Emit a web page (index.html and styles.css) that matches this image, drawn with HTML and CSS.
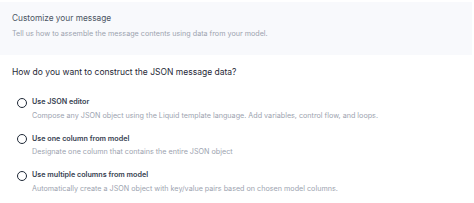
FILE: index.html
```html
<!DOCTYPE html>
<html lang="en">
<head>
    <meta charset="UTF-8">
    <title>Customize your message</title>
    <link rel="stylesheet" href="styles.css">
</head>
<body>
    <div class="panel-header">
        <h2>Customize your message</h2>
        <p>Tell us how to assemble the message contents using data from your model.</p>
    </div>

    <div class="panel-body">
        <h3>How do you want to construct the JSON message data?</h3>

        <div class="options">
            <label class="option">
                <span class="radio"></span>
                <span class="option-text">
                    <span class="option-title">Use JSON editor</span>
                    <span class="option-desc">Compose any JSON object using the Liquid template language. Add variables, control flow, and loops.</span>
                </span>
            </label>
            <label class="option">
                <span class="radio"></span>
                <span class="option-text">
                    <span class="option-title">Use one column from model</span>
                    <span class="option-desc">Designate one column that contains the entire JSON object</span>
                </span>
            </label>
            <label class="option">
                <span class="radio"></span>
                <span class="option-text">
                    <span class="option-title">Use multiple columns from model</span>
                    <span class="option-desc">Automatically create a JSON object with key/value pairs based on chosen model columns.</span>
                </span>
            </label>
        </div>
    </div>
</body>
</html>
```

FILE: styles.css
```css
:root {
    --panel-bg: #f8f9fc;
    --text-dark: #1f2937;
    --text-mid: #4b5563;
    --text-light: #9ca3af;
}

body {
    margin: 0;
    padding: 2px 2px 0 0;
    font-family: 'Inter', 'Liberation Sans', sans-serif;
    background: #ffffff;
    color: var(--text-dark);
}

.panel-header {
    background: var(--panel-bg);
    padding: 10px 12px 0;
    height: 43px;
}

.panel-header h2 {
    margin: 0;
    font-size: 8.3px;
    font-weight: 400;
    line-height: 12px;
    color: var(--text-mid);
}

.panel-header p {
    margin: 4.5px 0 0;
    font-size: 7.2px;
    line-height: 10px;
    color: var(--text-light);
}

.panel-body {
    padding: 11px 12px 0;
}

.panel-body h3 {
    margin: 0;
    font-size: 8.5px;
    font-weight: 400;
    line-height: 12px;
    color: var(--text-dark);
}

.options {
    display: flex;
    flex-direction: column;
    gap: 13px;
    margin-top: 19px;
    padding-left: 5px;
}

.option {
    display: flex;
    align-items: flex-start;
    gap: 5px;
    cursor: pointer;
}

.radio {
    width: 8px;
    height: 8px;
    margin-top: 0.5px;
    border: 1.4px solid #1f2937;
    border-radius: 50%;
    flex-shrink: 0;
}

.option-text {
    display: flex;
    flex-direction: column;
    gap: 3.5px;
}

.option-title {
    font-size: 7.2px;
    font-weight: 600;
    line-height: 10px;
    color: #374151;
}

.option-desc {
    font-size: 7.2px;
    line-height: 10px;
    color: var(--text-light);
}
```
